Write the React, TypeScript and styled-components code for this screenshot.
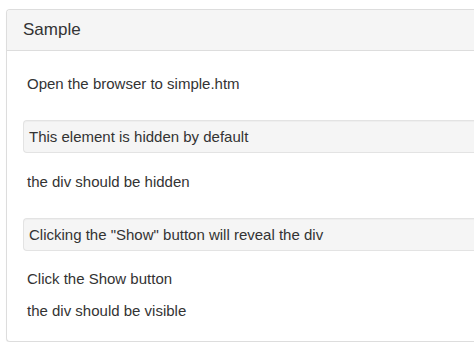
import styled, { createGlobalStyle } from 'styled-components';

const GlobalStyle = createGlobalStyle`
    html, body {
        margin: 0;
        padding: 0;
        background: #fff;
        overflow: hidden;
    }
    body {
        font-family: "Liberation Sans", Arial, sans-serif;
        color: #333;
    }
`;

const Panel = styled.div`
    margin: 9px 0 0 6px;
    border: 1px solid #ddd;
    border-right: none;
    border-radius: 4px 0 0 4px;
    background: #fff;
    box-shadow: 0 1px 1px rgba(0, 0, 0, 0.05);
`;

const PanelHeading = styled.div`
    height: 40px;
    display: flex;
    align-items: center;
    padding: 0 16px;
    background: #f5f5f5;
    border-bottom: 1px solid #ddd;
    border-radius: 3px 0 0 0;
`;

const PanelTitle = styled.h3`
    margin: 0;
    font-size: 17px;
    font-weight: normal;
    color: #333;
`;

const PanelBody = styled.div`
    display: flex;
    flex-direction: column;
    padding: 22px 0 20px 16px;
`;

const Line = styled.p<{ $gap?: number }>`
    margin: ${(p) => p.$gap ?? 0}px 0 0;
    padding: 0 4px;
    font-size: 15px;
    line-height: 21px;
`;

const Well = styled.div<{ $gap: number }>`
    margin-top: ${(p) => p.$gap}px;
    padding: 5px 5px;
    font-size: 15px;
    line-height: 21px;
    background: #f5f5f5;
    border: 1px solid #e3e3e3;
    border-right: none;
    border-radius: 4px 0 0 4px;
    white-space: nowrap;
    overflow: hidden;
    box-shadow: inset 0 1px 1px rgba(0, 0, 0, 0.03);
`;

export default function App() {
    return (
        <>
            <GlobalStyle />
            <Panel>
                <PanelHeading>
                    <PanelTitle>Sample</PanelTitle>
                </PanelHeading>
                <PanelBody>
                    <Line>Open the browser to simple.htm</Line>
                    <Well $gap={26}>This element is hidden by default</Well>
                    <Line $gap={18}>the div should be hidden</Line>
                    <Well $gap={26}>Clicking the "Show" button will reveal the div</Well>
                    <Line $gap={17}>Click the Show button</Line>
                    <Line $gap={11}>the div should be visible</Line>
                </PanelBody>
            </Panel>
        </>
    );
}
